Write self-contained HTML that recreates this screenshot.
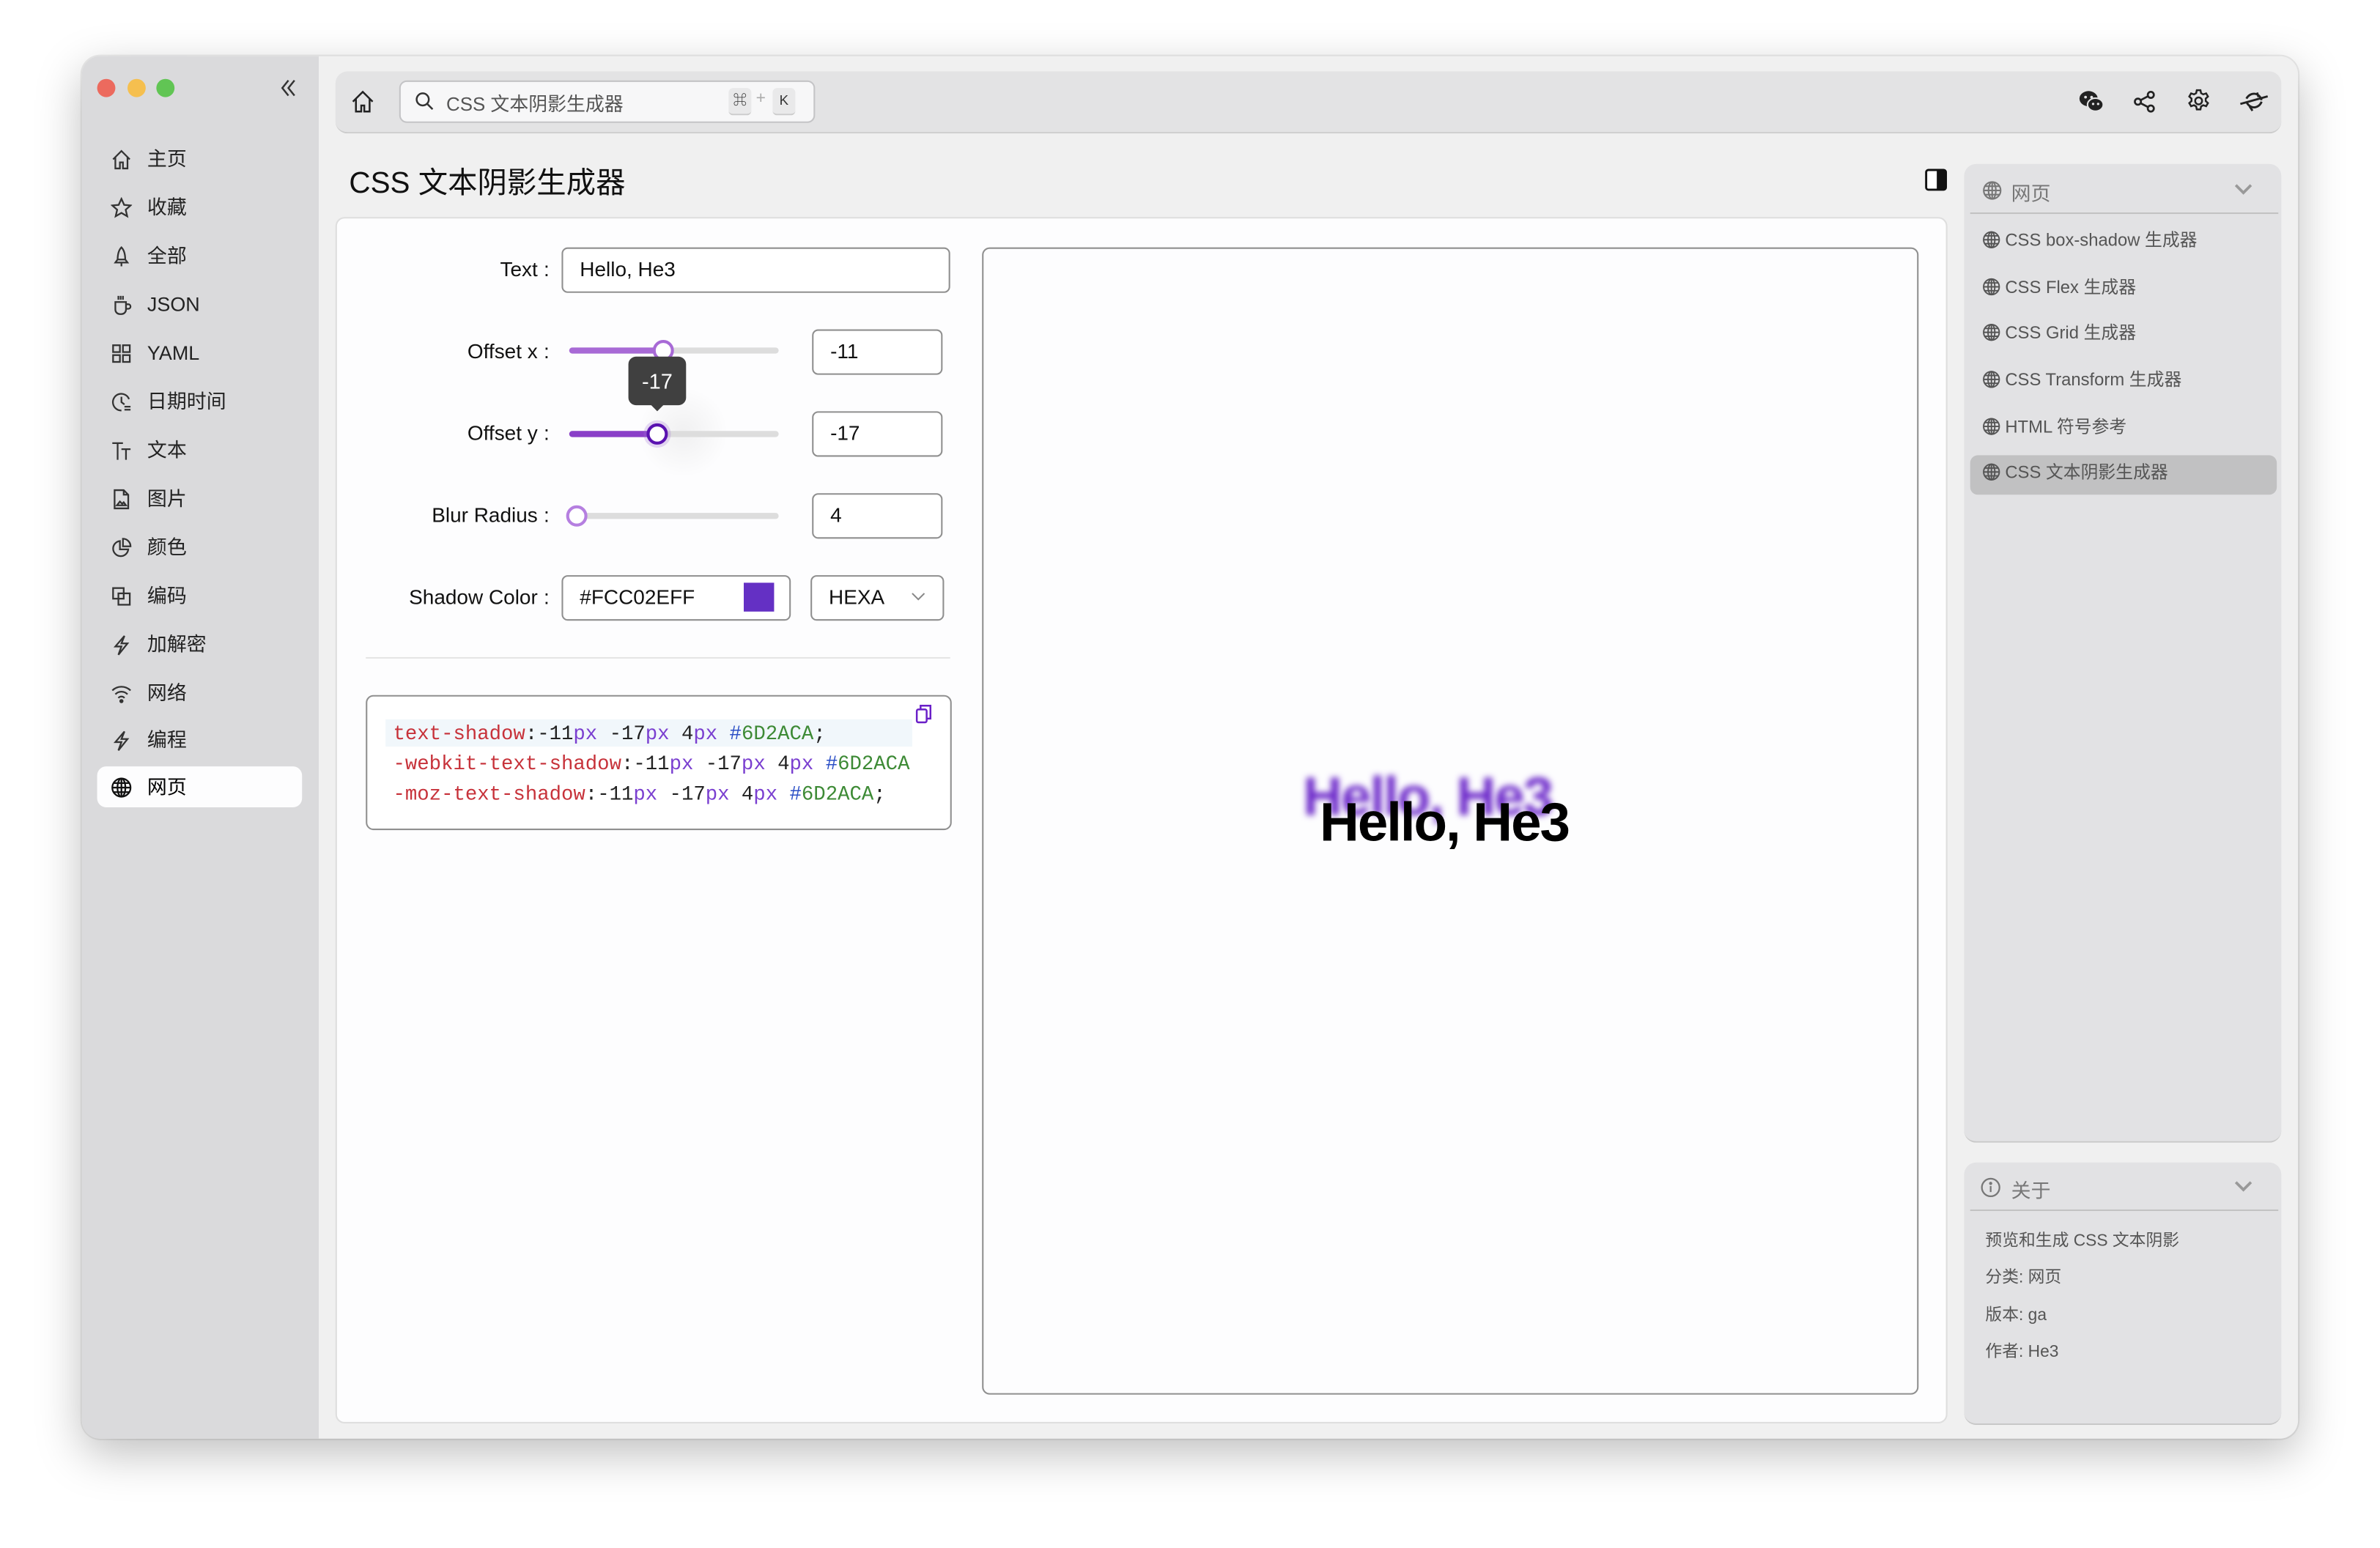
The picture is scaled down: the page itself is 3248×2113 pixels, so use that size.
<!DOCTYPE html>
<html><head><meta charset="utf-8"><style>
*{box-sizing:border-box;margin:0;padding:0}
html,body{width:3248px;height:2112px;overflow:hidden;background:#fff}
#s{position:absolute;left:0;top:0;width:1568px;height:1020px;transform:scale(2.07143);transform-origin:0 0;font-family:"Liberation Sans","Noto Sans CJK SC",sans-serif;color:#222}
.a{position:absolute}
.win{left:54px;top:37px;width:1460px;height:911px;border-radius:12px;background:#f0f0f0;overflow:hidden;box-shadow:0 10px 30px rgba(0,0,0,.25),0 0 0 1px rgba(0,0,0,.08)}
.side{left:0;top:0;width:156px;height:911px;background:#dadadc}
.nav{position:absolute;left:64px;width:135px;height:27px;font-size:13px;line-height:27px;padding-left:33px;color:#222}
.nav svg{position:absolute;left:9px;top:7px}
.lbl{position:absolute;font-size:13.5px;text-align:right;width:130px;left:232px;color:#111}
.inp{position:absolute;background:#fff;border:1px solid #8f8f8f;border-radius:4px;font-size:13.5px;padding-left:11px;color:#111}
.track{position:absolute;height:4px;border-radius:2px;background:#ddd}
.fill{position:absolute;height:4px;border-radius:2px;left:0;top:0}
.rp{font-size:11.5px;color:#555;position:absolute;left:1306px;height:24px;line-height:24px}
.rp svg{vertical-align:-2px;margin-right:3px}
code{font-family:"Liberation Mono","DejaVu Sans Mono",monospace}
.r{color:#c7323a}.p{color:#7a3fd0}.b{color:#2b4fc6}.g{color:#3d8a35}
</style></head><body><div id="s">
<div class="a win">
 <div class="a side"></div>
</div>
<div class="a" style="left:64px;top:52px;width:12px;height:12px;border-radius:6px;background:#ec6a5e"></div>
<div class="a" style="left:84px;top:52px;width:12px;height:12px;border-radius:6px;background:#f5bf4f"></div>
<div class="a" style="left:103px;top:52px;width:12px;height:12px;border-radius:6px;background:#61c554"></div>
<svg class="a" style="left:183px;top:51px" width="14" height="14" viewBox="0 0 14 14" fill="none" stroke="#333" stroke-width="1.2"><path d="M7 2L3 7l4 5M11 2L7 7l4 5"/></svg>

<div class="nav" style="top:91px"><svg width="14" height="14" viewBox="0 0 14 14" fill="none" stroke="#333" stroke-width="1.1"><path d="M1.5 7L7 1.5 12.5 7M3 5.5V13h3V9h2v4h3V5.5"/></svg>主页</div>
<div class="nav" style="top:123px"><svg width="14" height="14" viewBox="0 0 14 14" fill="none" stroke="#333" stroke-width="1.1"><path d="M7 1l1.8 4 4.2.4-3.2 2.8 1 4.3L7 10.3 3.2 12.5l1-4.3L1 5.4l4.2-.4z"/></svg>收藏</div>
<div class="nav" style="top:155px"><svg width="14" height="14" viewBox="0 0 14 14" fill="none" stroke="#333" stroke-width="1.1"><path d="M7 1C5 3 4.5 6 4.5 9h5C9.5 6 9 3 7 1zM4.5 9L3 11h8L9.5 9M7 11v2.5"/></svg>全部</div>
<div class="nav" style="top:187px"><svg width="14" height="14" viewBox="0 0 14 14" fill="none" stroke="#333" stroke-width="1.1"><path d="M3 5h7v5a3 3 0 01-3 3H6a3 3 0 01-3-3zM10 6.5h1.5a1.5 1.5 0 010 3H10M5 1v2.5M6.5 1v2.5M8 1v2.5"/></svg>JSON</div>
<div class="nav" style="top:219px"><svg width="14" height="14" viewBox="0 0 14 14" fill="none" stroke="#333" stroke-width="1.1"><rect x="1.5" y="1.5" width="4.5" height="4.5"/><rect x="8" y="1.5" width="4.5" height="4.5"/><rect x="1.5" y="8" width="4.5" height="4.5"/><rect x="8" y="8" width="4.5" height="4.5"/></svg>YAML</div>
<div class="nav" style="top:251px"><svg width="14" height="14" viewBox="0 0 14 14" fill="none" stroke="#333" stroke-width="1.1"><path d="M12 5A5.5 5.5 0 107 12.5M7 3.5V7l2 1.5M9 10h4M9 12h4"/></svg>日期时间</div>
<div class="nav" style="top:283px"><svg width="14" height="14" viewBox="0 0 14 14" fill="none" stroke="#333" stroke-width="1.1"><path d="M1 2h7M4.5 2v11M7 6h6M10 6v7"/></svg>文本</div>
<div class="nav" style="top:315px"><svg width="14" height="14" viewBox="0 0 14 14" fill="none" stroke="#333" stroke-width="1.1"><path d="M2.5 1h6l3 3v9h-9zM8.5 1v3h3M4 11l2-2.5 1.5 1.5 1-1 1.5 2z"/></svg>图片</div>
<div class="nav" style="top:347px"><svg width="14" height="14" viewBox="0 0 14 14" fill="none" stroke="#333" stroke-width="1.1"><path d="M6 2.5A5 5 0 1011.5 8H6zM8 1v5h5a5 5 0 00-5-5z"/></svg>颜色</div>
<div class="nav" style="top:379px"><svg width="14" height="14" viewBox="0 0 14 14" fill="none" stroke="#333" stroke-width="1.1"><rect x="1.5" y="1.5" width="7" height="7"/><rect x="5" y="5" width="7.5" height="7.5"/></svg>编码</div>
<div class="nav" style="top:411px"><svg width="14" height="14" viewBox="0 0 14 14" fill="none" stroke="#333" stroke-width="1.1"><path d="M9 1L3 8h4l-2 5.5L11 6H7z"/></svg>加解密</div>
<div class="nav" style="top:443px"><svg width="14" height="14" viewBox="0 0 14 14" fill="none" stroke="#333" stroke-width="1.1"><path d="M1 5a8.5 8.5 0 0112 0M3 7.5a5.5 5.5 0 018 0M5 10a2.5 2.5 0 014 0"/><circle cx="7" cy="12" r=".8" fill="#333"/></svg>网络</div>
<div class="nav" style="top:474px"><svg width="14" height="14" viewBox="0 0 14 14" fill="none" stroke="#333" stroke-width="1.1"><path d="M9 1L3 8h4l-2 5.5L11 6H7z"/></svg>编程</div>
<div class="nav" style="top:505px;background:#fdfdfe;border-radius:6px;color:#000"><svg width="14" height="14" viewBox="0 0 14 14" fill="none" stroke="#111" stroke-width="1.1"><circle cx="7" cy="7" r="6"/><ellipse cx="7" cy="7" rx="2.6" ry="6"/><path d="M1 7h12M2 4h10M2 10h10M7 1v12"/></svg>网页</div>

<div class="a" style="left:221px;top:47px;width:1282px;height:41px;background:#e3e3e4;border-radius:8px;border-bottom:1px solid #ccc"></div>
<svg class="a" style="left:231px;top:59px" width="16" height="16" viewBox="0 0 16 16" fill="none" stroke="#222" stroke-width="1.2"><path d="M1.5 8L8 1.5 14.5 8M3.5 6v8.5h3.5v-4h2v4h3.5V6"/></svg>
<div class="a" style="left:263px;top:53px;width:274px;height:28px;background:#f7f7f8;border:1px solid #c4c4c6;border-radius:5px"></div>
<svg class="a" style="left:273px;top:60px" width="13" height="13" viewBox="0 0 13 13" fill="none" stroke="#333" stroke-width="1.2"><circle cx="5.5" cy="5.5" r="4"/><path d="M8.5 8.5L12 12"/></svg>
<div class="a" style="left:294px;top:58px;font-size:12.5px;color:#555">CSS 文本阴影生成器</div>
<div class="a" style="left:480px;top:58px;width:15px;height:18px;background:#e9e9ea;border-radius:3px;border-bottom:1px solid #ccc;font-size:9px;text-align:center;line-height:17px;color:#333">⌘</div>
<div class="a" style="left:498px;top:59px;font-size:11px;color:#aaa">+</div>
<div class="a" style="left:509px;top:58px;width:15px;height:18px;background:#e9e9ea;border-radius:3px;border-bottom:1px solid #ccc;font-size:9px;text-align:center;line-height:17px;color:#333">K</div>
<svg class="a" style="left:1369px;top:59px" width="18" height="16" viewBox="0 0 18 16"><ellipse cx="7" cy="6" rx="6" ry="5" fill="#222"/><ellipse cx="11.5" cy="10" rx="5.2" ry="4.3" fill="#222" stroke="#e3e3e4" stroke-width="1"/><circle cx="5" cy="5" r=".9" fill="#e3e3e4"/><circle cx="9" cy="5" r=".9" fill="#e3e3e4"/><circle cx="10" cy="9.5" r=".8" fill="#e3e3e4"/><circle cx="13.3" cy="9.5" r=".8" fill="#e3e3e4"/></svg>
<svg class="a" style="left:1405px;top:59px" width="16" height="16" viewBox="0 0 16 16" fill="none" stroke="#222" stroke-width="1.3"><circle cx="12" cy="3.5" r="2"/><circle cx="3.5" cy="8" r="2"/><circle cx="12" cy="12.5" r="2"/><path d="M5.3 7l4.9-2.6M5.3 9l4.9 2.6"/></svg>
<svg class="a" style="left:1440px;top:58px" width="17" height="17" viewBox="0 0 24 24" fill="none" stroke="#222" stroke-width="1.7"><circle cx="12" cy="12" r="3.2"/><path d="M10.3 2h3.4l.6 2.8 2 1.1 2.7-.9 1.7 2.9-2.1 1.9v2.3l2.1 1.9-1.7 2.9-2.7-.9-2 1.1-.6 2.8h-3.4l-.6-2.8-2-1.1-2.7.9-1.7-2.9 2.1-1.9v-2.3L3.3 7.9 5 5l2.7.9 2-1.1z"/></svg>
<svg class="a" style="left:1475px;top:59px" width="20" height="16" viewBox="0 0 20 16" fill="none" stroke="#222" stroke-width="1.4"><path d="M1 9.5l18-5M5 6c2-4 8-5 10 1M15 8c-2 5-8 5-10 0M7 11l2 3M12 2l1 3"/></svg>

<div class="a" style="left:230px;top:104px;font-size:19.5px;color:#111">CSS 文本阴影生成器</div>
<svg class="a" style="left:1268px;top:111px" width="15" height="15" viewBox="0 0 15 15"><rect x="1" y="1" width="13" height="13" rx="1.5" fill="#fff" stroke="#111" stroke-width="1.4"/><rect x="8" y="1" width="6" height="13" fill="#111"/></svg>

<div class="a" style="left:221px;top:143px;width:1062px;height:795px;background:#fdfdfe;border:1px solid #dedede;border-radius:6px"></div>

<div class="lbl" style="top:170px">Text<span style="margin-left:4px">:</span></div>
<div class="inp" style="left:370px;top:163px;width:256px;height:30px;line-height:28px">Hello, He3</div>

<div class="lbl" style="top:224px">Offset x<span style="margin-left:4px">:</span></div>
<div class="track" style="left:375px;top:229px;width:138px"><div class="fill" style="width:61px;background:#a86ad6"></div></div>
<div class="a" style="left:430px;top:224px;width:14px;height:14px;border-radius:7px;border:2px solid #a86ad6;background:#fff"></div>
<div class="inp" style="left:535px;top:217px;width:86px;height:30px;line-height:28px">-11</div>

<div class="a" style="left:420px;top:255px;width:60px;height:60px;border-radius:30px;background:radial-gradient(rgba(0,0,0,.05),rgba(0,0,0,0) 70%)"></div>
<div class="a" style="left:414px;top:235px;width:38px;height:32px;background:#404040;border-radius:5px;color:#fff;font-size:14px;text-align:center;line-height:32px">-17</div>
<div class="a" style="left:428px;top:266px;width:0;height:0;border-left:5px solid transparent;border-right:5px solid transparent;border-top:5px solid #404040"></div>

<div class="lbl" style="top:278px">Offset y<span style="margin-left:4px">:</span></div>
<div class="track" style="left:375px;top:284px;width:138px"><div class="fill" style="width:57px;background:#8a3fc8"></div></div>
<div class="a" style="left:424px;top:277px;width:18px;height:18px;border-radius:9px;background:rgba(160,110,210,.25)"></div>
<div class="a" style="left:426px;top:279px;width:14px;height:14px;border-radius:7px;border:2px solid #5a12b0;background:#fff"></div>
<div class="inp" style="left:535px;top:271px;width:86px;height:30px;line-height:28px">-17</div>

<div class="lbl" style="top:332px">Blur Radius<span style="margin-left:4px">:</span></div>
<div class="track" style="left:375px;top:338px;width:138px"></div>
<div class="a" style="left:373px;top:333px;width:14px;height:14px;border-radius:7px;border:2px solid #b57fe0;background:#fff"></div>
<div class="inp" style="left:535px;top:325px;width:86px;height:30px;line-height:28px">4</div>

<div class="lbl" style="top:386px">Shadow Color<span style="margin-left:4px">:</span></div>
<div class="inp" style="left:370px;top:379px;width:151px;height:30px;line-height:28px">#FCC02EFF</div>
<div class="a" style="left:490px;top:384px;width:20px;height:19px;background:#6430c4"></div>
<div class="inp" style="left:534px;top:379px;width:88px;height:30px;line-height:28px">HEXA</div>
<svg class="a" style="left:600px;top:390px" width="10" height="7" viewBox="0 0 10 7" fill="none" stroke="#888" stroke-width="1"><path d="M1 1l4 4 4-4"/></svg>

<div class="a" style="left:241px;top:433px;width:385px;height:1px;background:#e5e5e5"></div>

<div class="a" style="left:241px;top:458px;width:386px;height:89px;border:1px solid #8f8f8f;border-radius:5px;background:#fff"></div>
<div class="a" style="left:254px;top:474px;width:347px;height:18px;background:#f1f7fb"></div>
<svg class="a" style="left:603px;top:464px" width="11" height="13" viewBox="0 0 11 13" fill="none" stroke="#6a1fc8" stroke-width="1.2"><rect x="1" y="3.5" width="6.5" height="8.5" rx="1"/><path d="M3.5 3.5V1h6.5v8.5H7.5"/></svg>
<div class="a" style="left:259px;top:473px;font-size:13.2px;line-height:19px;white-space:pre;color:#222"><code style="font-size:13.2px;line-height:19px"><span class="r">text-shadow</span>:-11<span class="p">px</span> -17<span class="p">px</span> 4<span class="p">px</span> <span class="b">#</span><span class="g">6D2ACA</span>;
<span class="r">-webkit-text-shadow</span>:-11<span class="p">px</span> -17<span class="p">px</span> 4<span class="p">px</span> <span class="b">#</span><span class="g">6D2ACA</span>
<span class="r">-moz-text-shadow</span>:-11<span class="p">px</span> -17<span class="p">px</span> 4<span class="p">px</span> <span class="b">#</span><span class="g">6D2ACA</span>;</code></div>

<div class="a" style="left:647px;top:163px;width:617px;height:756px;border:1px solid #8f8f8f;border-radius:5px;background:#fdfdfe"></div>
<div class="a" style="left:643px;top:518px;width:617px;text-align:center;font-size:36px;font-weight:bold;line-height:48px;letter-spacing:-1px;color:#000;text-shadow:-11px -17px 4px #6D2ACA;font-family:'Liberation Sans',sans-serif">Hello, He3</div>

<div class="a" style="left:1294px;top:108px;width:209px;height:645px;background:#e2e2e4;border-radius:8px;border-bottom:1px solid #c8c8c8"></div>
<svg class="a" style="left:1306px;top:119px" width="13" height="13" viewBox="0 0 14 14" fill="none" stroke="#777" stroke-width="1.1"><circle cx="7" cy="7" r="6"/><ellipse cx="7" cy="7" rx="2.6" ry="6"/><path d="M1 7h12M2 4h10M2 10h10M7 1v12"/></svg>
<div class="a" style="left:1325px;top:117px;font-size:13px;color:#777">网页</div>
<svg class="a" style="left:1472px;top:121px" width="12" height="8" viewBox="0 0 12 8" fill="none" stroke="#999" stroke-width="1.8"><path d="M1 1l5 5 5-5"/></svg>
<div class="a" style="left:1298px;top:140px;width:203px;height:1px;background:#c2c2c2"></div>
<div class="a" style="left:1298px;top:300px;width:202px;height:26px;background:#c1c1c2;border-radius:5px"></div>
<div class="rp" style="top:147px"><svg width="12" height="12" viewBox="0 0 14 14" fill="none" stroke="#555" stroke-width="1.1"><circle cx="7" cy="7" r="6"/><ellipse cx="7" cy="7" rx="2.6" ry="6"/><path d="M1 7h12M2 4h10M2 10h10M7 1v12"/></svg>CSS box-shadow 生成器</div>
<div class="rp" style="top:178px"><svg width="12" height="12" viewBox="0 0 14 14" fill="none" stroke="#555" stroke-width="1.1"><circle cx="7" cy="7" r="6"/><ellipse cx="7" cy="7" rx="2.6" ry="6"/><path d="M1 7h12M2 4h10M2 10h10M7 1v12"/></svg>CSS Flex 生成器</div>
<div class="rp" style="top:208px"><svg width="12" height="12" viewBox="0 0 14 14" fill="none" stroke="#555" stroke-width="1.1"><circle cx="7" cy="7" r="6"/><ellipse cx="7" cy="7" rx="2.6" ry="6"/><path d="M1 7h12M2 4h10M2 10h10M7 1v12"/></svg>CSS Grid 生成器</div>
<div class="rp" style="top:239px"><svg width="12" height="12" viewBox="0 0 14 14" fill="none" stroke="#555" stroke-width="1.1"><circle cx="7" cy="7" r="6"/><ellipse cx="7" cy="7" rx="2.6" ry="6"/><path d="M1 7h12M2 4h10M2 10h10M7 1v12"/></svg>CSS Transform 生成器</div>
<div class="rp" style="top:270px"><svg width="12" height="12" viewBox="0 0 14 14" fill="none" stroke="#555" stroke-width="1.1"><circle cx="7" cy="7" r="6"/><ellipse cx="7" cy="7" rx="2.6" ry="6"/><path d="M1 7h12M2 4h10M2 10h10M7 1v12"/></svg>HTML 符号参考</div>
<div class="rp" style="top:300px"><svg width="12" height="12" viewBox="0 0 14 14" fill="none" stroke="#555" stroke-width="1.1"><circle cx="7" cy="7" r="6"/><ellipse cx="7" cy="7" rx="2.6" ry="6"/><path d="M1 7h12M2 4h10M2 10h10M7 1v12"/></svg>CSS 文本阴影生成器</div>

<div class="a" style="left:1294px;top:766px;width:209px;height:173px;background:#e2e2e4;border-radius:8px;border-bottom:1px solid #c8c8c8"></div>
<svg class="a" style="left:1305px;top:776px" width="13" height="13" viewBox="0 0 13 13" fill="none" stroke="#777" stroke-width="1.1"><circle cx="6.5" cy="6.5" r="5.8"/><path d="M6.5 5.5v4"/><circle cx="6.5" cy="3.8" r=".5" fill="#777"/></svg>
<div class="a" style="left:1325px;top:774px;font-size:13px;color:#777">关于</div>
<svg class="a" style="left:1472px;top:778px" width="12" height="8" viewBox="0 0 12 8" fill="none" stroke="#999" stroke-width="1.8"><path d="M1 1l5 5 5-5"/></svg>
<div class="a" style="left:1298px;top:797px;width:203px;height:1px;background:#c2c2c2"></div>
<div class="a" style="left:1308px;top:809px;font-size:11px;color:#555">预览和生成 CSS 文本阴影</div>
<div class="a" style="left:1308px;top:833px;font-size:11px;color:#555">分类: 网页</div>
<div class="a" style="left:1308px;top:858px;font-size:11px;color:#555">版本: ga</div>
<div class="a" style="left:1308px;top:882px;font-size:11px;color:#555">作者: He3</div>
</div></body></html>
